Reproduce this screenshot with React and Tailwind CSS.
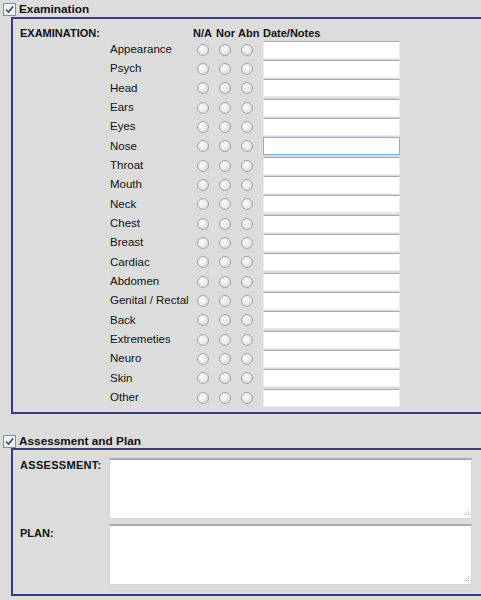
import { useState } from 'react';

const parts = [
  'Appearance', 'Psych', 'Head', 'Ears', 'Eyes', 'Nose', 'Throat', 'Mouth', 'Neck', 'Chest',
  'Breast', 'Cardiac', 'Abdomen', 'Genital / Rectal', 'Back', 'Extremeties', 'Neuro', 'Skin', 'Other',
];

function Check() {
  return (
    <span className="w-[13px] h-[13px] border border-[#8090a8] bg-[#f4f4f4] flex items-center justify-center shrink-0">
      <svg width="9" height="9" viewBox="0 0 9 9">
        <path d="M1 4.5 L3.5 7 L8 1.5" fill="none" stroke="#3a4670" strokeWidth="1.6" />
      </svg>
    </span>
  );
}

function Radio() {
  return (
    <div className="w-[22px] flex justify-center">
      <span className="w-[12px] h-[12px] rounded-full border border-[#a6a6a6] bg-[radial-gradient(circle_at_40%_40%,#ffffff,#d2d2d2)]" />
    </div>
  );
}

function Grip() {
  return (
    <svg width="6" height="6" viewBox="0 0 6 6" className="absolute right-[3px] bottom-[3px]">
      <rect x="5" y="0" width="1" height="1" fill="#b0b0b0" />
      <rect x="3" y="2" width="1" height="1" fill="#b0b0b0" />
      <rect x="5" y="2" width="1" height="1" fill="#b0b0b0" />
      <rect x="1" y="4" width="1" height="1" fill="#b0b0b0" />
      <rect x="3" y="4" width="1" height="1" fill="#b0b0b0" />
      <rect x="5" y="4" width="1" height="1" fill="#b0b0b0" />
    </svg>
  );
}

function Area() {
  return (
    <div className="relative">
      <textarea className="block w-[363px] h-[61px] resize-none bg-white outline-none border border-[#d6d6d6] border-t-2 border-t-[#a9a9a9]" />
      <Grip />
    </div>
  );
}

export default function App() {
  const [notes, setNotes] = useState({});

  return (
    <div className="w-[481px] h-[600px] overflow-hidden bg-[#dcdcdc] text-[11.5px] text-[#111] font-['Liberation_Sans',Arial,sans-serif]">
      {/* Examination */}
      <div className="flex items-center pt-[3px] pl-[3px] h-[16px] gap-[3px]">
        <Check />
        <span className="font-bold text-[11.8px] leading-[13px]">Examination</span>
      </div>
      <div className="mt-[1px] ml-[11px] w-[475px] border-2 border-[#3a3a88] pt-[7px] pb-[5px] pl-[7px]">
        <div className="flex h-[14px] leading-[14px] font-bold text-[11px]">
          <div className="w-[90px]">EXAMINATION:</div>
          <div className="w-[82px]" />
          <div className="w-[22px] pl-[1px]">N/A</div>
          <div className="w-[22px] pl-[2px]">Nor</div>
          <div className="w-[22px] pl-[2px] whitespace-nowrap">Abn</div>
          <div className="ml-[5px]">Date/Notes</div>
        </div>
        {parts.map(p => (
          <div key={p} className="flex items-center h-[19.33px]">
            <div className="w-[90px]" />
            <div className="w-[82px] whitespace-nowrap">{p}</div>
            <Radio />
            <Radio />
            <Radio />
            <input
              value={notes[p] || ''}
              onChange={e => setNotes({ ...notes, [p]: e.target.value })}
              className={`ml-[5px] w-[137px] h-[18px] bg-white outline-none px-1 border ${p === 'Nose' ? 'border-[#8fb0cc]' : 'border-[#ececec] border-t-[#a9a9a9]'}`}
            />
          </div>
        ))}
      </div>

      {/* Assessment and Plan */}
      <div className="flex items-center mt-[21px] pl-[3px] h-[13px] gap-[3px]">
        <Check />
        <span className="font-bold text-[11.8px] leading-[13px]">Assessment and Plan</span>
      </div>
      <div className="ml-[11px] w-[475px] border-2 border-[#3a3a88] pt-[8px] pb-[9px] pl-[7px]">
        <div className="flex">
          <div className="w-[89px] font-bold text-[11px] leading-[14px] tracking-[0.3px]">ASSESSMENT:</div>
          <Area />
        </div>
        <div className="flex mt-[5px]">
          <div className="w-[89px] font-bold text-[11px] leading-[14px] pt-[2px]">PLAN:</div>
          <Area />
        </div>
      </div>
    </div>
  );
}
